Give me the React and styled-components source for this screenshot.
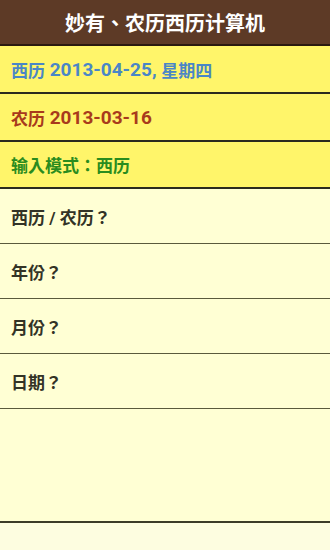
import React from 'react';
import styled, { createGlobalStyle } from 'styled-components';

const GlobalStyle = createGlobalStyle`
  html, body {
    margin: 0;
    padding: 0;
    background: #fdfde0;
  }
  body {
    font-family: Roboto, "Noto Sans CJK TC", sans-serif;
  }
`;

const Screen = styled.div`
  width: 330px;
  height: 550px;
  display: flex;
  flex-direction: column;
  background: #fdfde0;
  overflow: hidden;
`;

const Header = styled.div`
  height: 44px;
  background: #5d3a26;
  border-bottom: 2px solid #2a1a10;
  display: flex;
  align-items: center;
  justify-content: center;
  color: #ffffff;
  font-size: 20px;
  font-weight: 700;
`;

const InfoRow = styled.div`
  height: ${(props) => props.height || 46}px;
  background: #fff56a;
  border-bottom: 2px solid #2a2a1e;
  display: flex;
  align-items: center;
  white-space: pre;
  padding-left: 11px;
  font-size: 17px;
  font-weight: 700;
  color: ${(props) => props.color};
`;

// Latin digits render larger than the CJK glyphs on the device
const Num = styled.span`
  font-size: 19px;
`;

const Prompt = styled.div`
  height: 54px;
  background: #ffffd4;
  border-bottom: 1px solid #5a5a3c;
  display: flex;
  align-items: center;
  white-space: pre;
  padding-left: 11px;
  font-size: 17px;
  font-weight: 700;
  color: #333326;
`;

const Blank = styled.div`
  height: 112px;
  background: #ffffd4;
  border-bottom: 2px solid #3c3c28;
`;

const prompts = ['西历 / 农历？', '年份？', '月份？', '日期？'];

export default function App() {
  return (
    <Screen>
      <GlobalStyle />
      <Header>妙有、农历西历计算机</Header>
      <InfoRow color="#4a86c6">
        西历<Num> 2013-04-25, </Num>星期四
      </InfoRow>
      <InfoRow color="#a83a1c">
        农历<Num> 2013-03-16</Num>
      </InfoRow>
      <InfoRow color="#2a8c1e" height={45}>输入模式：西历</InfoRow>
      {prompts.map((p) => (
        <Prompt key={p}>{p}</Prompt>
      ))}
      <Blank />
    </Screen>
  );
}
